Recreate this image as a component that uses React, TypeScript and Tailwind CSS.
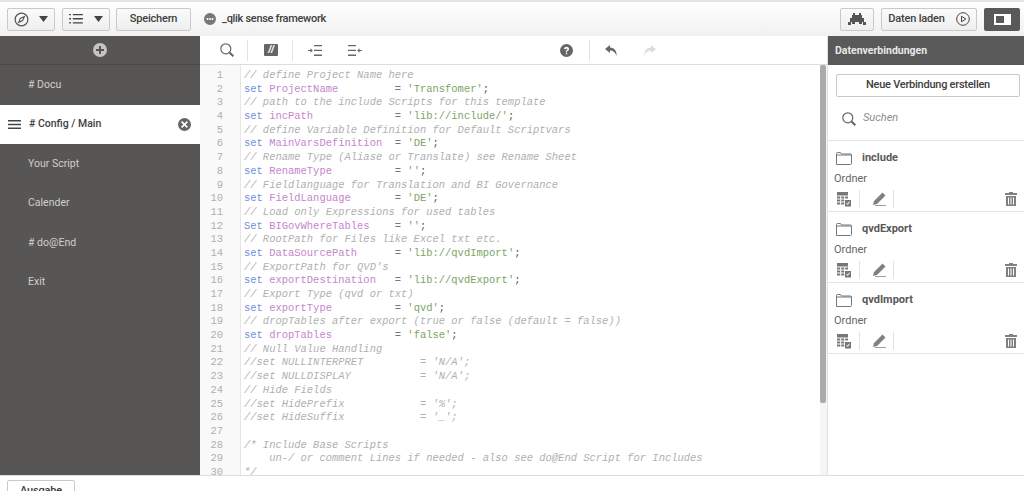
const codeLines = [
  "// define Project Name here",
  "set ProjectName         = 'Transfomer';",
  "// path to the include Scripts for this template",
  "set incPath             = 'lib://include/';",
  "// define Variable Definition for Default Scriptvars",
  "set MainVarsDefinition  = 'DE';",
  "// Rename Type (Aliase or Translate) see Rename Sheet",
  "set RenameType          = '';",
  "// Fieldlanguage for Translation and BI Governance",
  "set FieldLanguage       = 'DE';",
  "// Load only Expressions for used tables",
  "Set BIGovWhereTables    = '';",
  "// RootPath for Files like Excel txt etc.",
  "set DataSourcePath      = 'lib://qvdImport';",
  "// ExportPath for QVD's",
  "set exportDestination   = 'lib://qvdExport';",
  "// Export Type (qvd or txt)",
  "set exportType          = 'qvd';",
  "// dropTables after export (true or false (default = false))",
  "set dropTables          = 'false';",
  "// Null Value Handling",
  "//set NULLINTERPRET         = 'N/A';",
  "//set NULLDISPLAY           = 'N/A';",
  "// Hide Fields",
  "//set HidePrefix            = '%';",
  "//set HideSuffix            = '_';",
  "",
  "/* Include Base Scripts",
  "    un-/ or comment Lines if needed - also see do@End Script for Includes",
  "*/",
];

const navItems = ["# Docu", "# Config / Main", "Your Script", "Calender", "# do@End", "Exit"];
const connections = ["include", "qvdExport", "qvdImport"];

function CodeLine({ text }: { text: string }) {
  const match = text.match(/^([sS]et )(\w+)(\s+= )('.*')(;)$/);
  if (!match) {
    return <div className="h-[13.69px] whitespace-pre italic text-[#b0b0b0]">{text}</div>;
  }
  return (
    <div className="h-[13.69px] whitespace-pre">
      <span className="text-[#6f8fdc]">{match[1]}</span>
      <span className="text-[#c486cc]">{match[2]}</span>
      <span className="text-[#777]">{match[3]}</span>
      <span className="text-[#7ca565]">{match[4]}</span>
      <span className="text-[#555]">{match[5]}</span>
    </div>
  );
}

function Caret() {
  return (
    <svg width="9" height="6" viewBox="0 0 9 6" className="fill-[#444]">
      <path d="M0 0h9L4.500 6z" />
    </svg>
  );
}

function SearchIcon({ className }: { className: string }) {
  return (
    <svg width="14" height="14" viewBox="0 0 14 14" fill="none" className={`stroke-[#666] ${className}`}>
      <circle cx="5.800" cy="5.800" r="5" strokeWidth="1.200" />
      <path d="M9.500 9.500 13.300 13.300" strokeWidth="2" />
    </svg>
  );
}

function FolderIcon() {
  return (
    <svg width="16" height="13" viewBox="0 0 16 13" fill="none" className="stroke-[#777]">
      <path d="M.5 12.500V1.500q0-1 1-1h3l1 1.500h9q1 0 1 1v8.500q0 1-1 1z" />
      <path d="M.5 3h15" />
    </svg>
  );
}

function TableIcon() {
  return (
    <svg width="14" height="15" viewBox="0 0 14 15" className="fill-[#777]">
      <path d="M0 0h11v3.500H0zM0 4.500h3.200v2H0zM4.200 4.500h3v2h-3zM8.200 4.500H11v2H8.200zM0 7.500h3.200v2H0zM4.200 7.500h3v2h-3zM0 10.500h3.200v2H0zM4.200 10.500h3v2h-3z" />
      <path d="M8 8h6v6.500H8zm1.200 3.300 1.500 1.700 2.200-2.900-.7-.5-1.600 2.100-.8-.9z" fillRule="evenodd" />
    </svg>
  );
}

function PencilIcon() {
  return (
    <svg width="14" height="14" viewBox="0 0 14 14" className="fill-[#808080]">
      <path d="M10.500.5 13.500 3.500 5 12 1 13l1-4zM3 13h11v.7H3z" />
    </svg>
  );
}

function TrashIcon() {
  return (
    <svg width="12" height="14" viewBox="0 0 12 14" className="fill-[#808080]">
      <path d="M4 0h4v1h4v2H0V1h4zM1 4h10v10H1zm2 1.500v7h1v-7zm2.500 0v7h1v-7zm2.500 0v7h1v-7z" fillRule="evenodd" />
    </svg>
  );
}

function BarButton({ className, children }: { className: string; children: React.ReactNode }) {
  return (
    <div
      className={`flex h-[23px] items-center justify-center rounded-[2px] border border-[#c9c9c9] bg-gradient-to-b from-[#fbfbfb] to-[#eeeeee] text-[11px] font-medium tracking-[-0.2px] text-[#404040] ${className}`}
    >
      {children}
    </div>
  );
}

export default function App() {
  return (
    <div className="flex h-screen flex-col overflow-hidden bg-white font-['Roboto',sans-serif]">
      <header className="flex h-[36px] shrink-0 items-center border-t-2 border-t-[#e4e4e4] bg-gradient-to-b from-white to-[#f1f1f1] pl-[7px] pr-[4px]">
        <BarButton className="w-[48px] gap-[10px]">
          <svg width="15" height="15" viewBox="0 0 16 16" fill="none" className="stroke-[#555]">
            <circle cx="8" cy="8" r="6.800" strokeWidth="1.300" />
            <path d="M11 5 9.200 9.200 5 11l1.800-4.200z" strokeWidth="1.200" />
          </svg>
          <Caret />
        </BarButton>
        <BarButton className="ml-[7px] w-[48px] gap-[11px]">
          <svg width="14" height="10" viewBox="0 0 15 11" className="fill-[#444]">
            <path d="M0 0h2v1.500H0zM4 0h11v1.500H4zM0 4.500h2V6H0zM4 4.500h11V6H4zM0 9h2v1.500H0zM4 9h11v1.500H4z" />
          </svg>
          <Caret />
        </BarButton>
        <BarButton className="ml-[6px] w-[75px]">Speichern</BarButton>
        <svg width="12" height="12" viewBox="0 0 12 12" className="ml-[13px] fill-[#777]">
          <path d="M6 0a6 6 0 1 0 0 12A6 6 0 0 0 6 0zM2.700 5h1.600v2H2.700zm2.500 0h1.600v2H5.200zm2.500 0h1.600v2H7.700z" fillRule="evenodd" />
        </svg>
        <span className="ml-[6px] text-[11px] font-medium tracking-[-0.3px] text-[#404040]">_qlik sense framework</span>
        <BarButton className="ml-auto w-[34px]">
          <svg width="18" height="12" viewBox="0 0 18 12" className="fill-[#555]">
            <path d="M5 0h2v2h4V0h2v2h1v3h2v4h2v3h-3V9h-1v2h-3V9H7v2H4V9H3v3H0V9h2V5h2V2h1z" />
          </svg>
        </BarButton>
        <BarButton className="ml-[7px] w-[96px] gap-[11px]">
          Daten laden
          <svg width="14" height="14" viewBox="0 0 14 14" fill="none" className="stroke-[#444]">
            <circle cx="7" cy="7" r="6.300" />
            <path d="M5.500 4.200v5.600L9.800 7z" />
          </svg>
        </BarButton>
        <div className="ml-[7px] flex h-[23px] w-[36px] items-center justify-center rounded-[2px] bg-[#595959]">
          <div className="flex h-[11px] w-[17px] justify-end border-2 border-white">
            <div className="h-full w-[5px] bg-white" />
          </div>
        </div>
      </header>

      <main className="flex min-h-0 flex-1">
        <nav className="flex w-[200px] shrink-0 flex-col bg-[#575654] text-[10.500px] text-[#cfcfcd]">
          <div className="flex h-[29px] shrink-0 items-center justify-center border-b border-[#4b4a48]">
            <svg width="14" height="14" viewBox="0 0 14 14" className="fill-[#c4c4c2]">
              <path d="M7 0a7 7 0 1 0 0 14A7 7 0 0 0 7 0zM6 3h2v3h3v2H8v3H6V8H3V6h3z" fillRule="evenodd" />
            </svg>
          </div>
          {navItems.map((item) =>
            item === "# Config / Main" ? (
              <div key={item} className="flex h-[39.5px] shrink-0 items-center bg-white pl-[8px] pr-[9px] font-medium text-[#404040]">
                <svg width="13" height="9" viewBox="0 0 13 9" className="mr-[8px] fill-[#444]">
                  <path d="M0 0h13v1.400H0zM0 3.800h13v1.400H0zM0 7.600h13V9H0z" />
                </svg>
                {item}
                <svg width="13" height="13" viewBox="0 0 13 13" className="ml-auto fill-[#666]">
                  <path d="M6.500 0a6.500 6.500 0 1 0 0 13 6.500 6.500 0 0 0 0-13zM4.200 3l2.300 2.300L8.800 3 10 4.200 7.700 6.500 10 8.800 8.800 10 6.500 7.700 4.200 10 3 8.800l2.300-2.300L3 4.200z" fillRule="evenodd" />
                </svg>
              </div>
            ) : (
              <div key={item} className="flex h-[39.5px] shrink-0 items-center pl-[28px]">
                {item}
              </div>
            ),
          )}
        </nav>

        <section className="flex min-w-0 flex-1 flex-col">
          <div className="flex h-[29px] shrink-0 items-center border-b border-[#dddddd]">
            <SearchIcon className="ml-[20px]" />
            <div className="ml-[13px] h-[21px] w-px bg-[#e2e2e2]" />
            <div className="ml-[16px] flex h-[12px] w-[14px] items-center justify-center rounded-[1px] bg-[#666] font-['Liberation_Sans',sans-serif] text-[10px] font-bold italic leading-none text-white">
              //
            </div>
            <div className="ml-[14px] h-[21px] w-px bg-[#e2e2e2]" />
            <svg width="14" height="11" viewBox="0 0 14 11" className="ml-[15px] fill-[#666]">
              <path d="M6 0h8v1.300H6zM6 4.800h8v1.300H6zM6 9.600h8v1.300H6zM0 4.900h2.500V3.200l2.300 2.300-2.300 2.300V6.100H0z" />
            </svg>
            <svg width="14" height="11" viewBox="0 0 14 11" className="ml-[26px] fill-[#666]">
              <path d="M0 0h8v1.300H0zM0 4.800h8v1.300H0zM0 9.600h8v1.300H0zM14 4.900h-2.500V3.200L9.200 5.500l2.300 2.300V6.100H14z" />
            </svg>
            <svg width="13" height="13" viewBox="0 0 13 13" className="ml-[198px] fill-[#666]">
              <path d="M6.500 0a6.500 6.500 0 1 0 0 13 6.500 6.500 0 0 0 0-13zM4 5a2.500 2.300 0 1 1 3.600 2.100c-.4.200-.5.400-.5.900H5.800c0-.9.300-1.400 1-1.800.4-.2.600-.5.600-.9 0-.5-.4-.9-.9-.9-.6 0-1 .4-1.100 1zm1.800 3.800h1.400v1.400H5.800z" fillRule="evenodd" />
            </svg>
            <div className="ml-[16px] h-[21px] w-px bg-[#e2e2e2]" />
            <svg width="12" height="11" viewBox="0 0 12 11" className="ml-[15px] fill-[#666]">
              <path d="M5 0 0 4 5 8V5.500c3 0 5 1.300 6.500 5.500.5-5-2-8-6.500-8.500z" />
            </svg>
            <svg width="12" height="11" viewBox="0 0 12 11" className="ml-[27px] fill-[#dcdcdc]">
              <path d="M7 0l5 4-5 4V5.500c-3 0-5 1.300-6.500 5.500C0 6 2.500 3 7 2.500z" />
            </svg>
          </div>
          <div className="flex min-h-0 flex-1">
            <div className="flex min-w-0 flex-1 overflow-hidden font-['Liberation_Mono',monospace] text-[10.480px]">
              <div className="w-[41px] shrink-0 border-r border-[#e6e6e6] bg-[#f9f9f9] pr-[17px] pt-[3px] text-right text-[#b0b0b0]">
                {codeLines.map((_, i) => (
                  <div key={i} className="h-[13.69px]">
                    {i + 1}
                  </div>
                ))}
              </div>
              <div className="pl-[3px] pt-[3px]">
                {codeLines.map((line, i) => (
                  <CodeLine key={i} text={line} />
                ))}
              </div>
            </div>
            <div className="w-[7px] shrink-0 bg-[#f5f5f5]">
              <div className="h-[338px] w-[6px] rounded-[2px] bg-[#ababab]" />
            </div>
          </div>
        </section>

        <aside className="flex w-[197px] shrink-0 flex-col border-l border-[#e0e0e0]">
          <div className="flex h-[29px] shrink-0 items-center bg-[#595959] pl-[7px] text-[10.500px] font-bold text-[#e8e8e8]">
            Datenverbindungen
          </div>
          <div className="pb-[12px] pl-[8px] pr-[4px] pt-[9px]">
            <div className="flex h-[23px] items-center justify-center rounded-[2px] border border-[#c9c9c9] text-[11px] font-medium tracking-[-0.25px] text-[#404040]">
              Neue Verbindung erstellen
            </div>
            <div className="mt-[12px] flex h-[19px] items-center pl-[6px]">
              <SearchIcon className="" />
              <span className="ml-[7px] text-[11px] italic text-[#8c8c8c]">Suchen</span>
            </div>
          </div>
          <div className="border-t border-[#e4e4e4]">
            {connections.map((name) => (
              <div key={name} className="h-[71px] border-b border-[#e4e4e4] pl-[6px] pr-[7px] pt-[9px]">
                <div className="flex h-[16px] items-center pl-[2px]">
                  <FolderIcon />
                  <span className="ml-[10px] text-[11px] font-bold text-[#595959]">{name}</span>
                </div>
                <div className="mt-[6px] text-[11px] leading-[13px] text-[#666]">Ordner</div>
                <div className="mt-[4px] flex h-[20px] items-center pl-[3px]">
                  <TableIcon />
                  <div className="ml-[8px] h-[18px] w-px bg-[#e2e2e2]" />
                  <span className="ml-[12px] flex"><PencilIcon /></span>
                  <div className="ml-[7px] h-[18px] w-px bg-[#e2e2e2]" />
                  <span className="ml-auto flex"><TrashIcon /></span>
                </div>
              </div>
            ))}
          </div>
        </aside>
      </main>

      <footer className="flex h-[16px] shrink-0 items-start border-t border-[#dddddd] pl-[7px] pt-[4px]">
        <div className="flex h-[23px] w-[68px] shrink-0 items-center justify-center rounded-[2px] border border-[#c9c9c9] text-[11px] font-medium tracking-[-0.2px] text-[#404040]">
          Ausgabe
        </div>
      </footer>
    </div>
  );
}
